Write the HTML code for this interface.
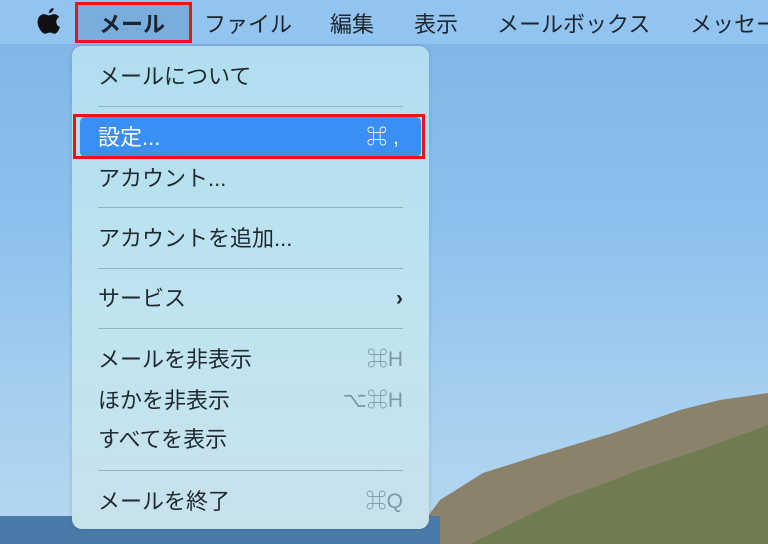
<!DOCTYPE html>
<html><head><meta charset="utf-8"><style>
body{margin:0;width:768px;height:544px;overflow:hidden;position:relative;font-family:"Liberation Sans","Noto Sans CJK JP",sans-serif;background:linear-gradient(180deg,#7fb4e6 0%,#8cc0ec 40%,#a6d0f0 75%,#b5d8f0 100%);}
.bar{position:absolute;left:0;top:0;width:768px;height:44px;background:#93c4f0;}
.bar span{position:absolute;top:7px;font-size:22px;color:#1c2630;white-space:nowrap;}
.sel{position:absolute;left:75px;top:2px;width:117px;height:41px;box-sizing:border-box;border:3px solid #e8131f;background:#7aacdc;}
.menu{position:absolute;left:72px;top:46px;width:357px;height:483px;border-radius:10px;background:linear-gradient(180deg,#b0def0,#c0e4ee 60%,#c8e2ec);box-shadow:0 0 4px rgba(0,0,0,.15);}
.it{position:absolute;left:26px;font-size:22px;color:#1e2a30;line-height:26px;white-space:nowrap;}
.sc{position:absolute;right:26px;font-size:21px;color:#7a9aa4;line-height:26px;white-space:nowrap;}
.sep{position:absolute;left:26px;width:305px;height:1px;background:#93b4c0;}
.hl{position:absolute;left:8px;top:71px;width:341px;height:40px;background:#3a8ff5;border-radius:5px;}
.red{position:absolute;left:73px;top:114px;width:352px;height:45px;box-sizing:border-box;border:3px solid #e8131f;}
</style></head><body>
<svg style="position:absolute;left:0;top:0" width="768" height="544">
<polygon points="425,520 440,500 483,473 540,455 613,433 680,410 720,400 768,393 768,544 425,544" fill="#8a826a"/>
<polygon points="470,544 560,500 640,470 700,450 768,425 768,544" fill="#6f7c52"/>
<rect x="0" y="516" width="440" height="28" fill="#4a7aa8"/>
</svg>
<div class="bar">
<svg style="position:absolute;left:37px;top:8px" width="24" height="26" viewBox="2.5 0 19.5 21.2" preserveAspectRatio="none"><path d="M16 0c0 2-1.5 4-3.8 4.2C12 2 13.8.2 16 0zM12 6c1.5 0 2.7-1 4.4-1 1.4 0 3.2.8 4.2 2.3-3.5 2-3 6.8.6 8.2-.8 2.4-2.6 5.5-4.4 5.5-1.5 0-2-.9-3.8-.9s-2.4.9-3.8.9C6.8 21 3 16 3 11.3 3 7.7 5.4 5 8.1 5c1.6 0 2.7 1 3.9 1z" fill="#111"/></svg>
<div class="sel"></div>
<span style="left:99px;font-weight:bold;">メール</span>
<span style="left:204px">ファイル</span>
<span style="left:330px">編集</span>
<span style="left:414px">表示</span>
<span style="left:497px">メールボックス</span>
<span style="left:690px">メッセージ</span>
</div>
<div class="menu">
<div class="it" style="top:18px">メールについて</div>
<div class="sep" style="top:60px"></div>
<div class="hl"></div>
<div class="it" style="top:79px;color:#fff">設定...</div>
<div class="sc" style="top:79px;color:#fff;right:30px">⌘ ,</div>
<div class="it" style="top:120px">アカウント...</div>
<div class="sep" style="top:161px"></div>
<div class="it" style="top:180px">アカウントを追加...</div>
<div class="sep" style="top:222px"></div>
<div class="it" style="top:240px">サービス</div>
<div class="sc" style="top:240px;color:#1e2a30;font-weight:bold">›</div>
<div class="sep" style="top:282px"></div>
<div class="it" style="top:301px">メールを非表示</div>
<div class="sc" style="top:301px">⌘H</div>
<div class="it" style="top:342px">ほかを非表示</div>
<div class="sc" style="top:342px">⌥⌘H</div>
<div class="it" style="top:381px">すべてを表示</div>
<div class="sep" style="top:424px"></div>
<div class="it" style="top:443px">メールを終了</div>
<div class="sc" style="top:443px">⌘Q</div>
</div>
<div class="red"></div>
</body></html>
